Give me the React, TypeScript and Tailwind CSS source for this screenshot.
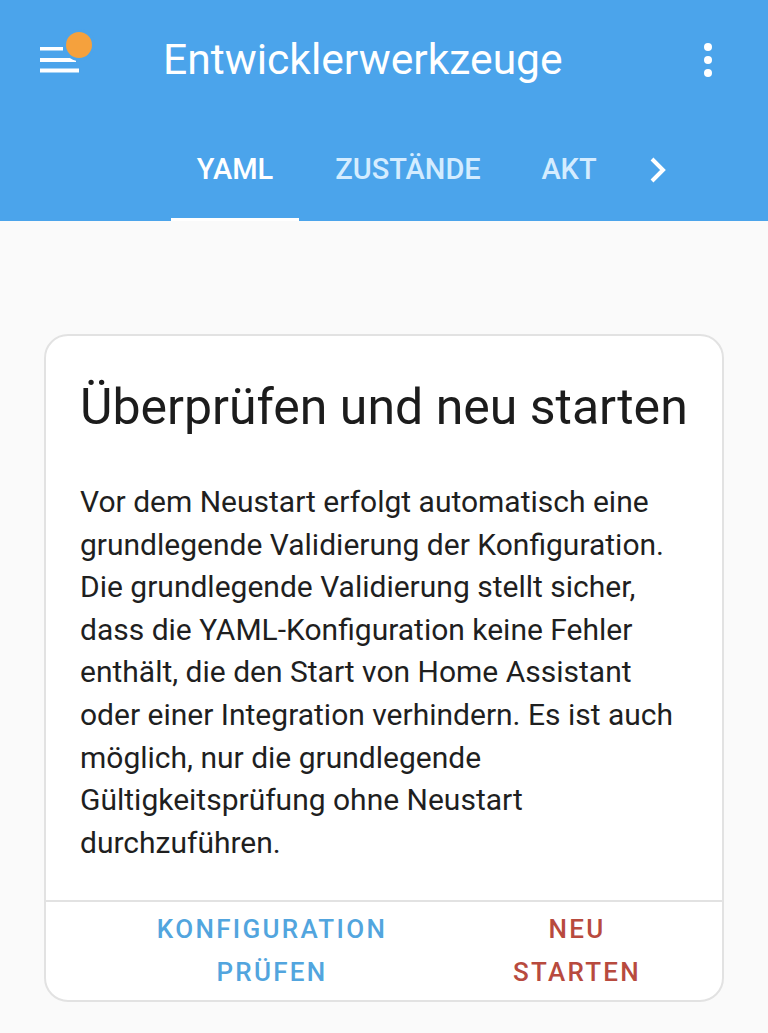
import React from "react";

const TABS: { label: string; width: string; active?: boolean }[] = [
  { label: "YAML", width: "w-[128px]", active: true },
  { label: "ZUSTÄNDE", width: "w-[218px]" },
  { label: "AKT", width: "w-[104px]" },
];

function MenuIcon() {
  return (
    <svg width="60" height="60" viewBox="0 0 60 60">
      <rect x="0" y="27" width="23" height="3.5" fill="#fff" />
      <rect x="0" y="38" width="36" height="4" fill="#fff" />
      <rect x="0" y="48.5" width="39" height="4" fill="#fff" />
      <circle cx="39" cy="25" r="16" fill="#4ba4eb" />
      <circle cx="39" cy="25" r="13" fill="#f5a13d" />
    </svg>
  );
}

export default function App() {
  return (
    <div className="min-h-[1033px] bg-[#fafafa]" style={{ fontFamily: "Roboto, 'Noto Sans', sans-serif" }}>
      <header className="bg-[#4ba4eb] text-white">
        <div className="flex h-[119px] items-start">
          <div className="ml-[40px] mt-[20px]">
            <MenuIcon />
          </div>
          <h1 className="ml-[63px] mt-[38px] flex-1 text-[42.6px] font-normal leading-none">Entwicklerwerkzeuge</h1>
          <div className="mr-[56px] mt-[43px] flex flex-col items-center gap-[5px]">
            <span className="h-[8px] w-[8px] rounded-full bg-white" />
            <span className="h-[8px] w-[8px] rounded-full bg-white" />
            <span className="h-[8px] w-[8px] rounded-full bg-white" />
          </div>
        </div>
        <nav className="flex h-[102px] pl-[171px]">
          {TABS.map((tab) => (
            <div key={tab.label} className={`${tab.width} flex flex-col items-center justify-end`}>
              <span
                className={`mb-[34px] text-[29px] font-medium leading-none ${tab.active ? "text-white" : "text-[#d4ecff]"}`}
              >
                {tab.label}
              </span>
              <span className={`h-[3px] w-full ${tab.active ? "bg-white" : "bg-transparent"}`} />
            </div>
          ))}
          <div className="ml-[26px] flex items-center">
            <svg width="22" height="30" viewBox="0 0 22 30">
              <path d="M5 4 L16 15 L5 26" stroke="#fff" strokeWidth="4" fill="none" />
            </svg>
          </div>
        </nav>
      </header>

      <main className="px-[44px] pt-[113px]">
        <section className="rounded-[24px] border-2 border-[#e2e2e2] bg-white">
          <div className="px-[34px] pt-[41px] pb-[36px]">
            <h2 className="text-[50px] font-normal leading-[60px] text-[#1c1c1c]">Überprüfen und neu starten</h2>
            <p className="mt-[44px] text-[30px] leading-[42.6px] text-[#1f1f1f]">
              Vor dem Neustart erfolgt automatisch eine grundlegende Validierung der Konfiguration. Die grundlegende
              Validierung stellt sicher, dass die YAML-Konfiguration keine Fehler enthält, die den Start von Home
              Assistant oder einer Integration verhindern. Es ist auch möglich, nur die grundlegende
              Gültigkeitsprüfung ohne Neustart durchzuführen.
            </p>
          </div>
          <div className="flex h-[100px] items-center border-t-2 border-[#e2e2e2] text-[26px] font-medium uppercase leading-[43px] tracking-[2.3px]">
            <div className="ml-[76px] w-[300px] text-center text-[#52a5de]">Konfiguration prüfen</div>
            <div className="ml-[80px] w-[150px] text-center text-[#b84a3e]">Neu starten</div>
          </div>
        </section>
      </main>
    </div>
  );
}
